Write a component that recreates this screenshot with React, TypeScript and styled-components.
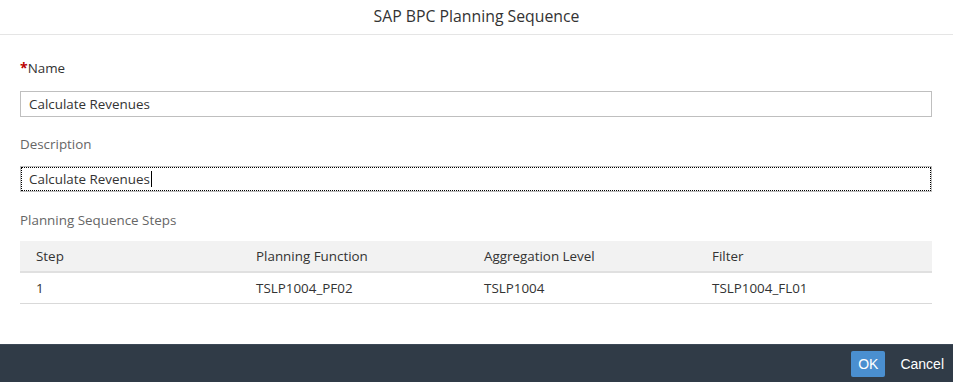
import styled, { createGlobalStyle } from 'styled-components';

const GlobalStyle = createGlobalStyle`
  html, body {
    margin: 0;
    padding: 0;
    background: #fff;
  }
  body {
    font-family: "Open Sans", "Liberation Sans", Arial, sans-serif;
  }
`;

const Dialog = styled.div`
  display: flex;
  flex-direction: column;
  width: 953px;
  height: 382px;
  background: #fff;
`;

const Header = styled.header`
  height: 35px;
  box-sizing: border-box;
  padding-bottom: 3px;
  display: flex;
  align-items: center;
  justify-content: center;
  border-bottom: 1px solid #e5e5e5;
  font-size: 15.8px;
  color: #333;
`;

const Content = styled.div`
  flex: 1;
  display: flex;
  flex-direction: column;
  padding: 25px 21px 0 20px;
`;

const Label = styled.label<{ $gap?: number; $after?: number }>`
  display: block;
  font-size: 13.4px;
  color: #666;
  line-height: 16px;
  height: 16px;
  margin-top: ${p => p.$gap ?? 0}px;
  margin-bottom: ${p => p.$after ?? 15}px;
`;

const Required = styled.span`
  color: #bb0000;
  font-weight: bold;
  font-size: 14px;
`;

const NameLabel = styled(Label)`
  color: #333;
`;

const Input = styled.div<{ $focused?: boolean }>`
  height: 26px;
  box-sizing: border-box;
  display: flex;
  align-items: center;
  padding-left: 8px;
  font-size: 13.4px;
  color: #333;
  border: 1px solid #bfbfbf;
  outline: ${p => (p.$focused ? '1px dotted #000' : 'none')};
  outline-offset: -2px;
`;

const Caret = styled.span`
  display: inline-block;
  width: 1px;
  height: 16px;
  background: #000;
  margin-left: 1px;
`;

const Table = styled.div`
  display: grid;
  grid-template-columns: repeat(4, 1fr);
  font-size: 13.4px;
  color: #333;
`;

const HeadCell = styled.div<{ $pad: number }>`
  height: 30px;
  display: flex;
  align-items: center;
  padding-left: ${p => p.$pad}px;
  background: #f2f2f2;
  border-bottom: 2px solid #e0e0e0;
`;

const Cell = styled.div<{ $pad: number }>`
  height: 30px;
  display: flex;
  align-items: center;
  padding-left: ${p => p.$pad}px;
  border-bottom: 1px solid #d9d9d9;
`;

const Footer = styled.footer`
  height: 38px;
  box-sizing: border-box;
  display: flex;
  align-items: center;
  justify-content: flex-end;
  gap: 15px;
  padding-right: 9px;
  background: #303b47;
  border-top: 1px solid #3c4856;
`;

const Button = styled.button<{ $primary?: boolean }>`
  height: 26px;
  padding: 0 ${p => (p.$primary ? 7 : 0)}px;
  border: none;
  border-radius: 2px;
  font-family: "Liberation Sans", Arial, sans-serif;
  font-size: 14px;
  color: #fff;
  background: ${p => (p.$primary ? '#4a8fd0' : 'transparent')};
`;

const columns = [
  { title: 'Step', value: '1', pad: 16 },
  { title: 'Planning Function', value: 'TSLP1004_PF02', pad: 8 },
  { title: 'Aggregation Level', value: 'TSLP1004', pad: 8 },
  { title: 'Filter', value: 'TSLP1004_FL01', pad: 8 },
];

export default function App() {
  return (
    <>
      <GlobalStyle />
      <Dialog>
        <Header>SAP BPC Planning Sequence</Header>
        <Content>
          <NameLabel $after={15}><Required>*</Required>Name</NameLabel>
          <Input>Calculate Revenues</Input>
          <Label $gap={19} $after={14}>Description</Label>
          <Input $focused>Calculate Revenues<Caret /></Input>
          <Label $gap={20} $after={13}>Planning Sequence Steps</Label>
          <Table>
            {columns.map(c => (
              <HeadCell key={c.title} $pad={c.pad}>{c.title}</HeadCell>
            ))}
            {columns.map(c => (
              <Cell key={c.title} $pad={c.pad}>{c.value}</Cell>
            ))}
          </Table>
        </Content>
        <Footer>
          <Button $primary>OK</Button>
          <Button>Cancel</Button>
        </Footer>
      </Dialog>
    </>
  );
}
